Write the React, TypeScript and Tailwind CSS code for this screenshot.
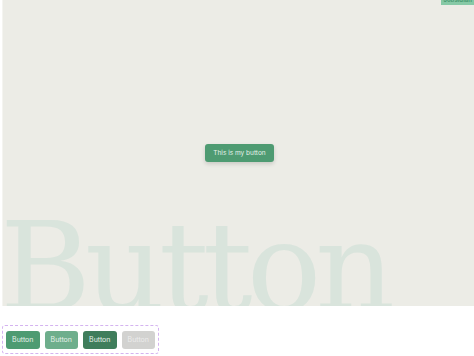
import React from "react";

export default function App() {
  return (
    <div className="w-[474px] h-[356px] bg-white overflow-hidden relative" style={{ fontFamily: "Inter, 'Liberation Sans', sans-serif" }}>
      <div className="ml-[2px] w-[472px] h-[306px] bg-[#ecece6] relative overflow-hidden border-l border-[#f4f4f0]">
        <div className="absolute right-0 top-[-5px] h-[10px] px-[2px] bg-[#86c9a6] text-[6px] leading-[10px] text-[#4b9a72] font-bold">Jobsidian</div>
        <div
          className="absolute left-[-3px] top-[205px] text-[124px] leading-none text-[#d9e4dc] tracking-[-6px] select-none"
          style={{ fontFamily: "'DejaVu Serif', serif" }}
        >
          Button
        </div>
        <div className="absolute inset-0 flex items-center justify-center">
          <button className="ml-[2px] h-[18px] px-[8px] rounded-[3px] bg-[#4e9b72] text-[#e6f1ea] text-[6.5px] leading-none shadow-[0_2px_4px_rgba(0,0,0,0.15)]">
            This is my button
          </button>
        </div>
      </div>
      <div className="mt-[19px] ml-[2px] w-[157px] h-[29px] border border-dashed border-[#d4b3f0] rounded-[3px] flex items-center gap-[5px] px-[3px]">
        <button className="w-[34px] h-[18px] rounded-[3px] bg-[#4e9b72] text-[#e6f1ea] text-[7px] leading-none">Button</button>
        <button className="w-[34px] h-[18px] rounded-[3px] bg-[#6eae8c] text-[#e6f1ea] text-[7px] leading-none">Button</button>
        <button className="w-[34px] h-[18px] rounded-[3px] bg-[#3f7d5b] text-[#e6f1ea] text-[7px] leading-none">Button</button>
        <button className="w-[34px] h-[18px] rounded-[3px] bg-[#d2d2d0] text-[#ececec] text-[7px] leading-none">Button</button>
      </div>
    </div>
  );
}
